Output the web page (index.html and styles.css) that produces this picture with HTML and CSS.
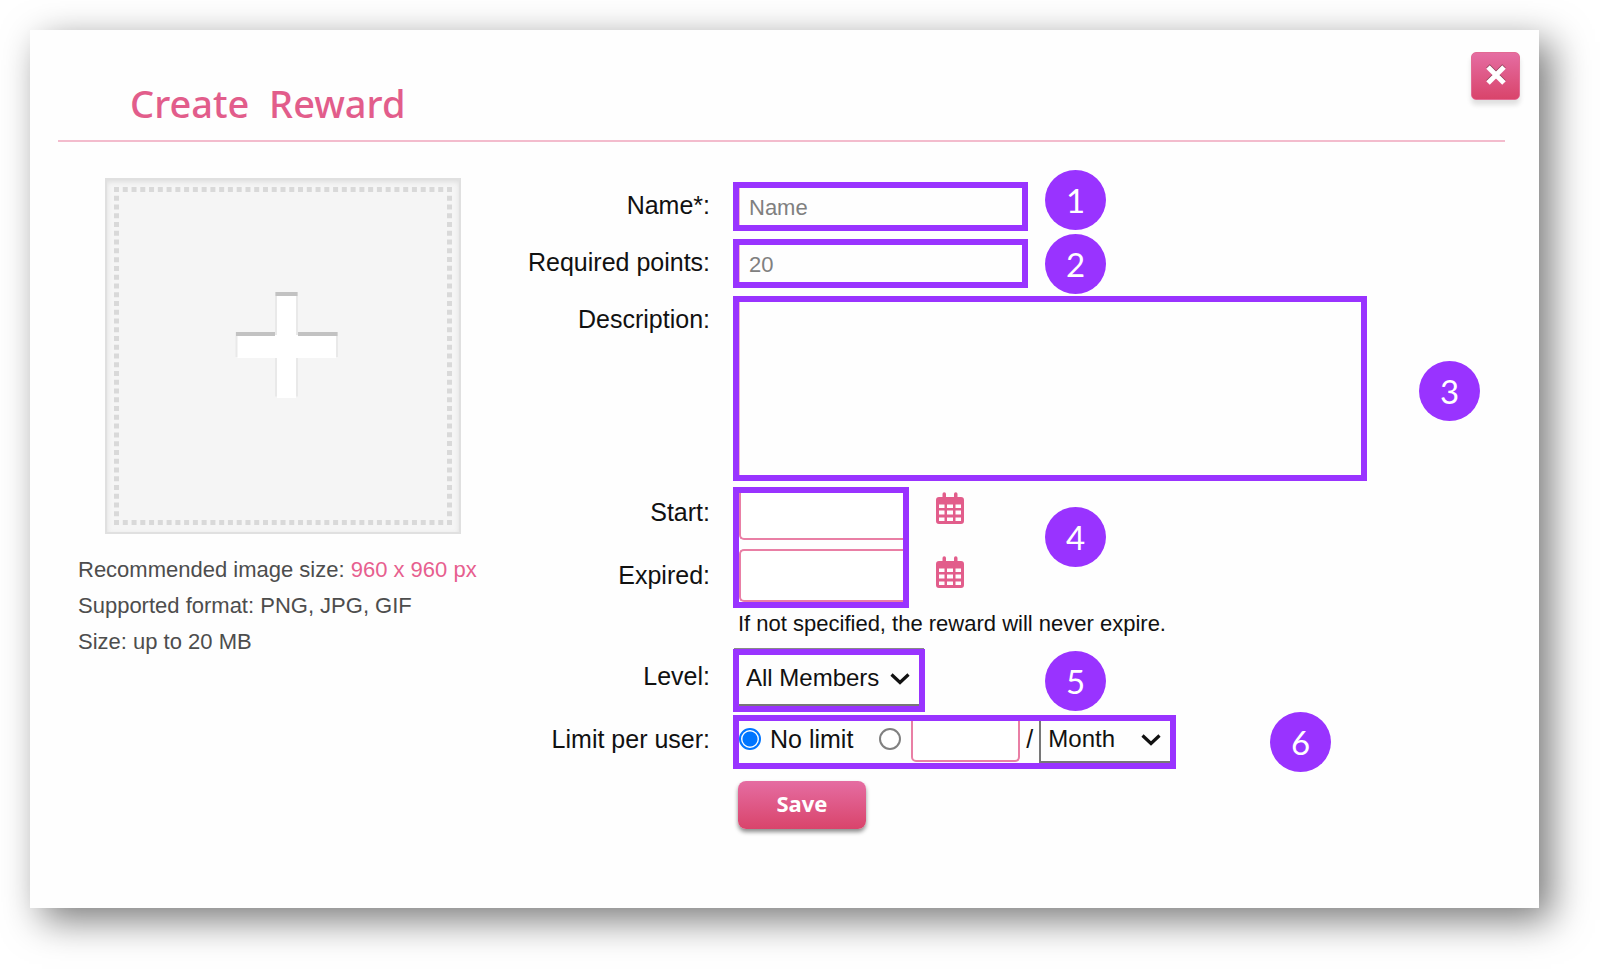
FILE: index.html
```html
<!DOCTYPE html>
<html lang="en">
<head>
<meta charset="utf-8">
<title>Create Reward</title>
<link rel="stylesheet" href="styles.css">
</head>
<body>
<svg class="defs" aria-hidden="true">
  <symbol id="calendar" viewBox="0 0 28 32">
    <path fill="currentColor" fill-rule="evenodd" d="M6.500 2a1.500 1.500 0 0 1 3.500 0v3h8V2a1.500 1.500 0 0 1 3.500 0v3H25a3 3 0 0 1 3 3v21a3 3 0 0 1-3 3H3a3 3 0 0 1-3-3V8a3 3 0 0 1 3-3h3.500zM3 12.500v3.500h5.500v-3.500zM11 12.500v3.500h6v-3.500zM19.500 12.500v3.500h5.500v-3.500zM3 18.500v4h5.500v-4zM11 18.500v4h6v-4zM19.500 18.500v4h5.500v-4zM3 25.500v3.500h5.500v-3.500zM11 25.500v3.500h6v-3.500zM19.500 25.500v3.500h5.500v-3.500z"/>
  </symbol>
  <symbol id="chevron" viewBox="0 0 20 12">
    <path d="M1.500 1.500 10 9.500l8.500-8" fill="none" stroke="currentColor" stroke-width="3.200"/>
  </symbol>
</svg>
<main class="dialog">
  <header class="dialog-header">
    <h1 class="title">Create&nbsp; Reward</h1>
    <button class="close" type="button" aria-label="Close">
      <svg viewBox="0 0 22 22" width="22" height="22"><path class="close-shade" d="M3 2l16 16M19 2L3 18"/><path class="close-cross" d="M3 3l16 16M19 3L3 19"/></svg>
    </button>
  </header>
  <div class="body">
    <section class="media">
      <button class="upload" type="button" aria-label="Add image">
        <svg viewBox="0 0 356 356" width="356" height="356">
          <rect class="stitch" x="11.500" y="11.500" width="333" height="333"/>
          <path class="plus-edge" d="M130.500 154H170V114h23v40h40v25h-40v39.500h-23V179h-39.500z"/>
          <path class="plus" d="M132.500 157H172V117h19v40h40v23h-40v40h-19v-40h-39.500z"/>
          <path class="plus-top" d="M131 156h39M193 156h39.500M170.500 116h22"/>
        </svg>
      </button>
      <p class="notes">Recommended image size: <span class="accent">960 x 960 px</span><br>Supported format: PNG, JPG, GIF<br>Size: up to 20 MB</p>
    </section>
    <form class="form">
      <label class="label" for="name">Name*:</label>
      <div class="field">
        <input class="marked text" id="name" type="text" placeholder="Name">
        <span class="badge badge-near badge-raised">1</span>
      </div>
      <label class="label" for="points">Required points:</label>
      <div class="field">
        <input class="marked text" id="points" type="text" placeholder="20">
        <span class="badge badge-near">2</span>
      </div>
      <label class="label" for="description">Description:</label>
      <div class="field">
        <textarea class="marked area" id="description"></textarea>
        <span class="badge badge-far">3</span>
      </div>
      <div class="date-labels">
        <label for="start">Start:</label>
        <label for="expired">Expired:</label>
      </div>
      <div class="field dates">
        <div class="marked date-box">
          <input class="date" id="start" type="text">
          <input class="date" id="expired" type="text">
        </div>
        <div class="pickers">
          <button class="picker" type="button" aria-label="Pick start date"><svg width="28" height="32"><use href="#calendar"/></svg></button>
          <button class="picker" type="button" aria-label="Pick expiry date"><svg width="28" height="32"><use href="#calendar"/></svg></button>
        </div>
        <span class="badge badge-near badge-dates">4</span>
      </div>
      <p class="hint">If not specified, the reward will never expire.</p>
      <label class="label label-level" for="level">Level:</label>
      <div class="field">
        <div class="marked level-box">
          <select class="select" id="level"><option>All Members</option></select>
          <svg class="chevron" width="20" height="12"><use href="#chevron"/></svg>
        </div>
        <span class="badge badge-near">5</span>
      </div>
      <span class="label label-limit" id="limit-label">Limit per user:</span>
      <div class="field limit" role="group" aria-labelledby="limit-label">
        <div class="marked limit-box">
          <label class="choice"><input class="radio" type="radio" name="limit" checked>No limit</label>
          <input class="radio" type="radio" name="limit" aria-label="Limited">
          <input class="count" type="text" aria-label="Limit count">
          <span class="slash">/</span>
          <div class="period">
            <select class="select" aria-label="Period"><option>Month</option></select>
            <svg class="chevron" width="20" height="12"><use href="#chevron"/></svg>
          </div>
        </div>
        <span class="badge badge-limit">6</span>
      </div>
      <button class="save" type="submit">Save</button>
    </form>
  </div>
</main>
</body>
</html>
```
FILE: styles.css
```css
* { box-sizing: border-box; }
body {
  margin: 0;
  padding: 30px 61px 61px 30px;
  background: #fff;
  color: #111;
  font: 25px/30px "Liberation Sans", Arial, sans-serif;
}
input, select, textarea, button { font: inherit; color: inherit; margin: 0; }
.defs { position: absolute; width: 0; height: 0; }
.dialog {
  background: #fefefe;
  box-shadow: 12px 12px 36px rgba(0, 0, 0, .53);
  padding-bottom: 79px;
}
.dialog-header {
  display: flex;
  justify-content: space-between;
  align-items: flex-start;
  height: 112px;
  margin: 0 34px 0 28px;
  padding-top: 22px;
  border-bottom: 2px solid #f3bccd;
}
.title {
  margin: 21px 0 0 72px;
  color: #e25d8b;
  font: 500 38px/60px "Noto Sans", sans-serif;
}
.close {
  display: grid;
  place-items: center;
  width: 49px;
  height: 48px;
  margin-right: -15px;
  padding: 0 0 2px;
  border: 1px solid #e26a93;
  border-radius: 5px;
  background: linear-gradient(#e56da2, #d9446b);
  box-shadow: 0 5px 5px rgba(0, 0, 0, .12);
}
.close-cross { stroke: #fff; stroke-width: 5; }
.close-shade { stroke: #8d3a57; stroke-width: 5; }
.body {
  display: grid;
  grid-template-columns: 450px 1fr;
  padding: 36px 0 0 48px;
}
.upload {
  display: block;
  width: 356px;
  height: 356px;
  margin-left: 27px;
  padding: 0;
  border: 0;
  background: #f5f5f5;
  box-shadow: inset 0 0 0 2px #e0e0e0, inset 0 2px 5px 2px #dedede;
}
.upload svg { display: block; }
.stitch { fill: none; stroke: #d9d9d9; stroke-width: 5; stroke-dasharray: 5 3.763; stroke-dashoffset: 2.500; }
.plus-edge { fill: #e9e9e9; }
.plus { fill: #fff; }
.plus-top { stroke: #c2c2c2; stroke-width: 4; }
.notes {
  margin: 18px 0 0;
  color: #4d4d4d;
  font-size: 22px;
  line-height: 36px;
}
.accent { color: #e75f8f; }
.form {
  display: grid;
  grid-template-columns: 182px 1fr;
  column-gap: 23px;
  align-content: start;
  padding-top: 4px;
}
.label { padding-top: 8px; text-align: right; white-space: nowrap; }
.label-level { padding-top: 12px; }
.label-limit { padding-top: 4px; }
.field { position: relative; margin-bottom: 8px; }
.marked {
  display: block;
  border: 6px solid #9933ff;
  border-radius: 0;
  background: #fefefe;
  outline: 0;
}
.text {
  width: 295px;
  height: 49px;
  padding: 2px 10px 0;
  font-size: 22px;
  box-shadow: inset 1px 0 #f3b3cb;
}
.text::placeholder { color: #808080; opacity: 1; }
.area {
  width: 100%;
  max-width: 634px;
  height: 185px;
  resize: none;
  box-shadow: inset 1px 0 #f3b3cb;
}
.badge {
  position: absolute;
  display: grid;
  place-items: center;
  width: 61px;
  height: 60px;
  border-radius: 50%;
  background: #9933ff;
  color: #fff;
  font: 33px/60px Lato, sans-serif;
}
.badge-near { left: 312px; top: calc(50% - 30px); }
.badge-raised { top: calc(50% - 37px); }
.badge-dates { top: calc(50% - 41px); }
.badge-far { left: 686px; top: calc(50% - 28px); }
.badge-limit { left: 537px; top: calc(50% - 30px); }
.date-labels {
  display: flex;
  flex-direction: column;
  gap: 33px;
  padding-top: 8px;
  text-align: right;
}
.dates { display: flex; gap: 27px; margin: -2px 0 0; }
.date-box {
  display: flex;
  flex-direction: column;
  gap: 9px;
  width: 176px;
  height: 121px;
  overflow: hidden;
}
.date {
  width: 170px;
  height: 53px;
  flex: none;
  border: 2px solid #e97fa5;
  border-radius: 5px 0 0 5px;
  border-right: 0;
  background: #fff;
  padding: 0 8px;
}
.date:first-child { height: 47px; border-top: 0; border-radius: 0 0 0 5px; }
.pickers { display: flex; flex-direction: column; gap: 32px; padding-top: 5px; }
.picker { width: 28px; height: 32px; padding: 0; border: 0; background: none; color: #e25d8b; }
.picker svg { display: block; }
.hint {
  grid-column: 2;
  margin: 0 0 0 5px;
  padding-top: 1px;
  height: 41px;
  font-size: 22px;
}
.level-box {
  position: relative;
  width: 192px;
  height: 63px;
  box-shadow: 0 -2px 0 -1px #888;
}
.select {
  width: 100%;
  height: 100%;
  padding: 0 7px 4px;
  border: 0;
  border-bottom: 2px solid #777;
  border-radius: 0;
  background: none;
  appearance: none;
  font-size: 24px;
}
.chevron { position: absolute; right: 9px; top: 50%; margin-top: -8px; pointer-events: none; }
.limit { margin: -5px 0 12px; }
.limit-box {
  display: flex;
  align-items: flex-start;
  width: 443px;
  height: 54px;
}
.choice { display: flex; align-items: center; gap: 9px; margin: 3px 26px 0 0; }
.radio {
  appearance: none;
  flex: none;
  width: 22px;
  height: 22px;
  border: 2px solid #808080;
  border-radius: 50%;
  background: #fff;
}
.limit-box > .radio { margin-top: 7px; }
.radio:checked { border-color: #0075ff; background: radial-gradient(circle, #0075ff 7px, #fff 8px); }
.count {
  width: 109px;
  height: 41px;
  margin-left: 10px;
  border: 2px solid #e97fa5;
  border-top: 0;
  border-radius: 0 0 5px 5px;
  background: #fff;
}
.slash { width: 19px; margin-top: 3px; text-align: center; }
.period {
  position: relative;
  flex: 1;
  height: 42px;
  border-left: 2px solid #777;
}
.save {
  grid-column: 2;
  width: 128px;
  height: 48px;
  margin-left: 5px;
  padding: 0 0 4px;
  border: 0;
  border-radius: 8px;
  background: linear-gradient(#e56da2, #d9446b);
  box-shadow: 0 3px 4px rgba(0, 0, 0, .45);
  color: #fff;
  font: 700 22px/44px "Noto Sans", sans-serif;
}
```
